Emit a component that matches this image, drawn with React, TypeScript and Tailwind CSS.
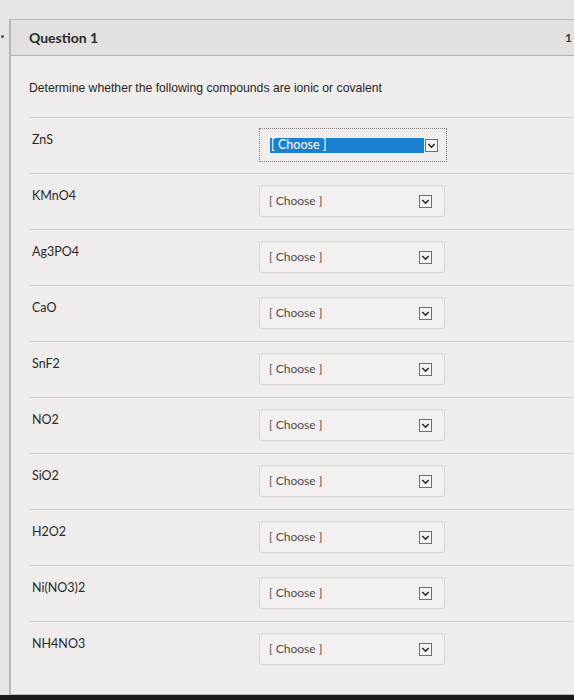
import React from "react";

const compounds = ["ZnS", "KMnO4", "Ag3PO4", "CaO", "SnF2", "NO2", "SiO2", "H2O2", "Ni(NO3)2", "NH4NO3"];

function Arrow() {
  return (
    <svg width="13" height="13" viewBox="0 0 13 13" className="shrink-0">
      <rect x="0.5" y="0.5" width="12" height="12" fill="#f4f3f1" stroke="#6f6e6c" />
      <path d="M3.3 5 L6.5 8.2 L9.7 5" fill="none" stroke="#2a2a2a" strokeWidth="1.6" />
    </svg>
  );
}

function Select({ focused }: { focused: boolean }) {
  if (focused) {
    return (
      <div className="w-[188px] h-[34px] border border-dotted border-[#7d7b79] bg-[#efeeec] flex items-center pl-[10px] pr-[8px]">
        <div className="flex-1 h-[15px] bg-[#1b7fd0] flex items-center pl-[1px]">
          <span className="text-white text-[12.5px] leading-none" style={{ fontFamily: "Lato, sans-serif" }}>[ Choose ]</span>
        </div>
        <div className="ml-[1px]"><Arrow /></div>
      </div>
    );
  }
  return (
    <div className="w-[186px] h-[32px] border border-[#d7d5d3] rounded-[3px] bg-[#f1f0ee] flex items-center pl-[9px] pr-[12px]">
      <span className="flex-1 text-[#4f4e4c] text-[12px] leading-none" style={{ fontFamily: "Lato, sans-serif" }}>[ Choose ]</span>
      <Arrow />
    </div>
  );
}

export default function App() {
  return (
    <div className="w-[574px] h-[700px] overflow-hidden bg-[#e7e5e3] flex flex-col relative">
      <div className="absolute left-[1px] top-[35px] w-[3px] h-[3px] rounded-full bg-[#555]" />
      <div className="flex-1 pt-[19px] pl-[9px] flex flex-col min-h-0">
        <div className="flex-1 border-l-2 border-t border-b border-[#b9b7b5] bg-[#eeedeb] flex flex-col min-h-0">
          <div className="h-[36px] bg-[#e3e1df] border-b border-[#b3b1af] flex items-center justify-between pl-[18px] pr-[2px]">
            <span className="text-[14px] font-bold text-[#2a2a2a]" style={{ fontFamily: "Lato, sans-serif" }}>Question 1</span>
            <span className="text-[12px] font-bold text-[#333]" style={{ fontFamily: "Lato, sans-serif" }}>1</span>
          </div>
          <div className="pl-[18px]">
            <div className="h-[61px] pt-[26px]">
              <p className="text-[12.2px] text-[#262626] leading-none" style={{ fontFamily: "'Liberation Sans', Arial, sans-serif" }}>
                Determine whether the following compounds are ionic or covalent
              </p>
            </div>
            {compounds.map((c, i) => (
              <div key={c} className="h-[56px] border-t border-[#d3d1cf] flex items-start">
                <div className="w-[230px] pl-[3px] pt-[16px] text-[12.5px] text-[#2a2a2a] leading-none" style={{ fontFamily: "Lato, sans-serif" }}>{c}</div>
                <div className={i === 0 ? "pt-[10px]" : "pt-[11px]"}>
                  <Select focused={i === 0} />
                </div>
              </div>
            ))}
          </div>
        </div>
      </div>
      <div className="h-[5px] bg-[#1b1b1b]" />
    </div>
  );
}
